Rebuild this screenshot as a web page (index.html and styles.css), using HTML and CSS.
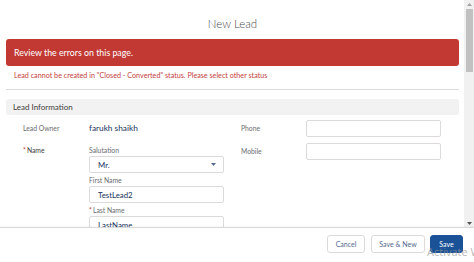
FILE: index.html
```html
<!DOCTYPE html>
<html lang="en">
<head>
    <meta charset="UTF-8">
    <meta name="viewport" content="width=device-width, initial-scale=1.0">
    <title>New Lead</title>
<link rel="stylesheet" href="styles.css">
</head>
<body>
    <div class="modal">
        <div class="modal-main">
            <div class="modal-body">
                <h2 class="modal-title">New Lead</h2>

                <div class="error-banner">Review the errors on this page.</div>
                <p class="error-text">Lead cannot be created in "Closed - Converted" status. Please select other status</p>

                <hr class="divider">

                <div class="section-title">Lead Information</div>

                <div class="form-grid">
                    <div class="field">
                        <span class="field-label">Lead Owner</span>
                        <span class="field-value">farukh shaikh</span>
                    </div>
                    <div class="field field-right">
                        <span class="field-label">Phone</span>
                        <input class="input" type="text">
                    </div>

                    <div class="field field-name">
                        <span class="field-label field-label-strong"><abbr class="req">*</abbr>Name</span>
                        <div class="name-group">
                            <label class="sub-label">Salutation</label>
                            <div class="input select">
                                <span>Mr.</span>
                                <svg class="select-arrow" width="5" height="3" viewBox="0 0 5 3"><path d="M0 0 L5 0 L2.5 3 Z" fill="#54698d"/></svg>
                            </div>
                            <label class="sub-label">First Name</label>
                            <input class="input" type="text" value="TestLead2">
                            <label class="sub-label"><abbr class="req">*</abbr>Last Name</label>
                            <input class="input" type="text" value="LastName">
                        </div>
                    </div>
                    <div class="field field-right">
                        <span class="field-label">Mobile</span>
                        <input class="input" type="text">
                    </div>
                </div>
            </div>

            <!-- fake scrollbar of the modal body -->
            <div class="scrollbar">
                <svg class="scroll-arrow" width="5" height="3" viewBox="0 0 5 3"><path d="M0 3 L5 3 L2.5 0 Z" fill="#a3a3a3"/></svg>
                <div class="scroll-thumb"></div>
                <div class="scroll-rest"></div>
                <svg class="scroll-arrow" width="5" height="3" viewBox="0 0 5 3"><path d="M0 0 L5 0 L2.5 3 Z" fill="#505050"/></svg>
            </div>
        </div>

        <footer class="modal-footer">
            <button class="btn btn-cancel">Cancel</button>
            <button class="btn btn-new">Save &amp; New</button>
            <button class="btn btn-brand">Save</button>
        </footer>

        <div class="watermark">Activate W</div>
    </div>
</body>
</html>
```

FILE: styles.css
```css
/* General Styles */
body {
    font-family: Lato, "Open Sans", Arial, sans-serif;
    margin: 0;
    padding: 0;
    background-color: #ffffff;
    color: #16325c;
}

.modal {
    position: relative;
    width: 474px;
    height: 262px;
    display: flex;
    flex-direction: column;
    overflow: hidden;
}

.modal-main {
    display: flex;
    height: 227px;
}

.modal-body {
    flex: 1;
    padding: 0 5px 0 6px;
    overflow: hidden;
}

.modal-title {
    margin: 0;
    padding-top: 17px;
    height: 14px;
    line-height: 14px;
    font-size: 11.5px;
    font-weight: 300;
    color: #4a4a4a;
    text-align: center;
}

/* Errors */
.error-banner {
    margin-top: 8px;
    height: 27px;
    line-height: 27px;
    padding-left: 8px;
    background-color: #c23934;
    color: #ffffff;
    font-size: 8.8px;
    border-radius: 3px;
}

.error-text {
    margin: 5px 0 0 8px;
    line-height: 10px;
    font-size: 7.2px;
    color: #c4423d;
}

.divider {
    margin: 8px 0 0;
    border: 0;
    border-top: 1px solid #dddbda;
}

.section-title {
    margin-top: 9px;
    height: 16px;
    line-height: 16px;
    padding-left: 7px;
    background-color: #f3f2f2;
    border-radius: 3px;
    font-size: 8px;
    color: #3e3e3c;
}

/* Form */
.form-grid {
    display: grid;
    grid-template-columns: 235px 1fr;
    row-gap: 6px;
    padding-top: 5px;
    align-items: start;
}

.field {
    display: flex;
    align-items: center;
    min-height: 17px;
    padding-left: 17px;
}

.field-right {
    padding-left: 0;
}

.field-name {
    align-items: flex-start;
}

.field-label {
    width: 66px;
    flex-shrink: 0;
    font-size: 6.8px;
    color: #6b6d70;
    margin-top: -2px;
}

.field-right .field-label {
    width: 65px;
}

.field-name .field-label {
    margin-top: 0;
    padding-top: 2px;
    line-height: 11px;
}

.field-label-strong {
    color: #3e3e3c;
}

.req {
    color: #c23934;
    text-decoration: none;
    margin-right: 1px;
}

.field-value {
    margin-top: -2px;
    font-size: 8.3px;
    color: #16325c;
}

.name-group {
    display: flex;
    flex-direction: column;
    width: 135px;
    padding-top: 2px;
}

.sub-label {
    line-height: 11px;
    font-size: 6.8px;
    color: #6b6d70;
}

.name-group .input + .sub-label {
    margin-top: 2px;
}

.input {
    box-sizing: border-box;
    width: 135px;
    height: 17px;
    margin: 0;
    padding: 0 8px;
    border: 1px solid #dddbda;
    border-radius: 2px;
    background: #ffffff;
    font-family: inherit;
    font-size: 7.8px;
    color: #16325c;
    outline: none;
}

.select {
    display: flex;
    align-items: center;
    justify-content: space-between;
}

.select-arrow {
    margin-right: -1px;
}

/* Scrollbar */
.scrollbar {
    width: 10px;
    background-color: #f1f1f1;
    display: flex;
    flex-direction: column;
    align-items: center;
    padding: 3px 0 2px;
    box-sizing: border-box;
}

.scroll-arrow {
    flex-shrink: 0;
}

.scroll-thumb {
    margin-top: 3px;
    width: 7px;
    height: 63px;
    background-color: #c1c1c1;
}

.scroll-rest {
    flex: 1;
}

/* Footer */
.modal-footer {
    flex: 1;
    display: flex;
    justify-content: flex-end;
    align-items: flex-start;
    gap: 6px;
    padding: 7px 11px 0 0;
    border-top: 1px solid #d8d8d8;
    box-shadow: 0 -1px 2px rgba(0, 0, 0, 0.04);
}

.btn {
    box-sizing: border-box;
    height: 18px;
    padding: 0;
    border: 1px solid #dddbda;
    border-radius: 3px;
    background-color: #ffffff;
    font-family: inherit;
    font-size: 7px;
    color: #54698d;
}

.btn-cancel {
    width: 38px;
}

.btn-new {
    width: 54px;
    margin-right: -1px;
}

.btn-brand {
    width: 33px;
    border-color: #1b5297;
    background-color: #1b5297;
    color: #ffffff;
}

/* Windows watermark over the footer */
.watermark {
    position: absolute;
    left: 427px;
    top: 245px;
    line-height: 14px;
    font-family: "Open Sans", sans-serif;
    font-size: 11px;
    color: rgba(150, 150, 150, 0.7);
    white-space: nowrap;
    pointer-events: none;
}
```
